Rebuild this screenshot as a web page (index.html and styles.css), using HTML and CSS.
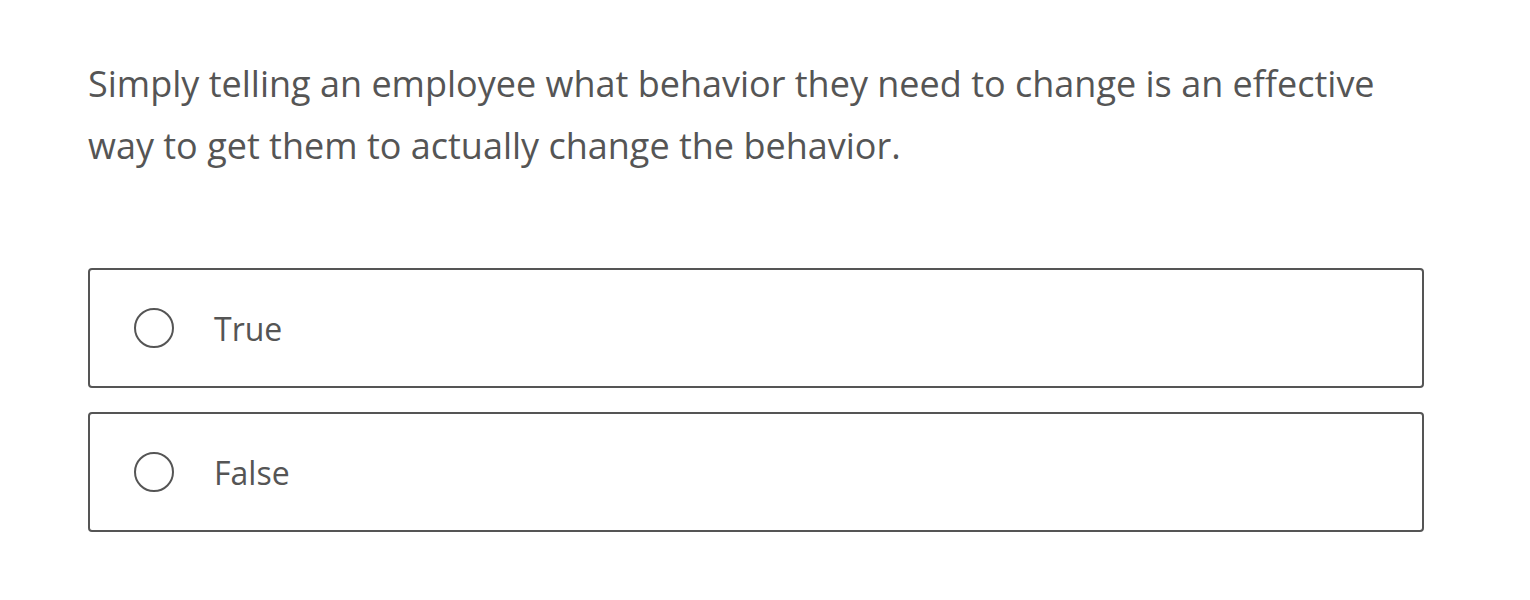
FILE: index.html
```html
<!DOCTYPE html>
<html lang="en">
<head>
  <meta charset="UTF-8">
  <meta name="viewport" content="width=device-width, initial-scale=1">
  <title>Question</title>
  <link rel="stylesheet" href="styles.css">
</head>
<body>
  <div class="question">
    <p class="question-text">Simply telling an employee what behavior they need to change is an effective way to get them to actually change the behavior.</p>
    <div class="answers">
      <label class="answer">
        <span class="radio"></span>
        <span class="answer-text">True</span>
      </label>
      <label class="answer">
        <span class="radio"></span>
        <span class="answer-text">False</span>
      </label>
    </div>
  </div>
</body>
</html>
```

FILE: styles.css
```css
body {
  margin: 0;
  font-family: 'Open Sans', sans-serif;
  color: #555;
  background: #fff;
}

.question {
  width: 1336px;
  padding: 53px 0 0 88px;
}

.question-text {
  margin: 0;
  font-size: 36px;
  line-height: 62px;
}

.answers {
  margin-top: 91px;
  display: flex;
  flex-direction: column;
  gap: 24px;
}

.answer {
  display: flex;
  align-items: center;
  height: 120px;
  box-sizing: border-box;
  border: 2px solid #555;
  border-radius: 4px;
  padding-left: 44px;
}

.radio {
  width: 40px;
  height: 40px;
  box-sizing: border-box;
  border: 2px solid #555;
  border-radius: 50%;
  flex-shrink: 0;
}

.answer-text {
  margin-left: 40px;
  font-size: 32px;
}
```
